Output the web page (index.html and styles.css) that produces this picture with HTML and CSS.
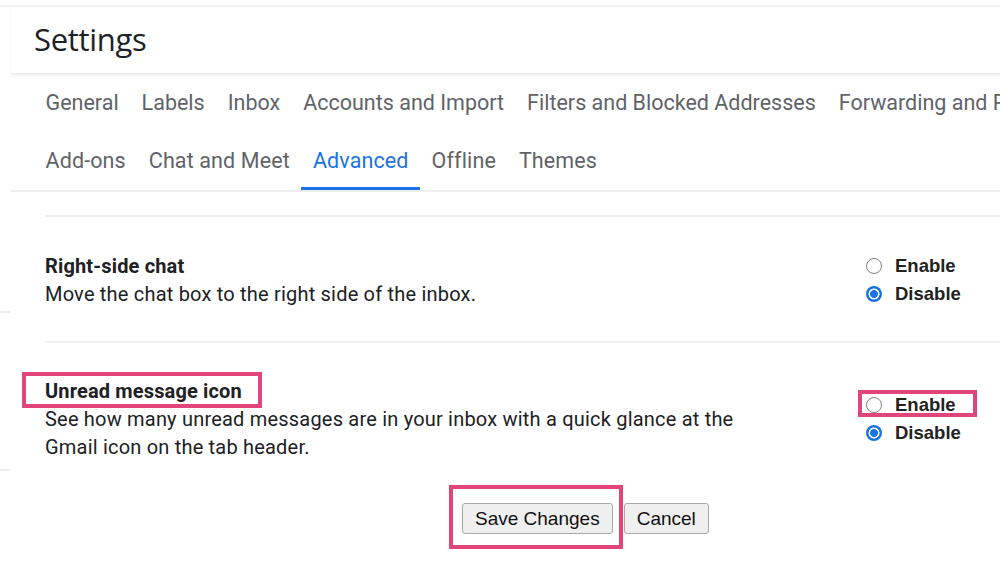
FILE: index.html
```html
<!DOCTYPE html>
<html>
<head>
<meta charset="utf-8">
<link rel="stylesheet" href="styles.css">
</head>
<body>
<div class="topline"></div>
<div class="page">
  <div class="side">
    <div class="mark mark-1"></div>
    <div class="mark mark-2"></div>
  </div>
  <div class="main">
    <div class="header">
      <h1 class="title">Settings</h1>
    </div>
    <nav class="tabs">
      <div class="tab-row">
        <span class="tab">General</span>
        <span class="tab">Labels</span>
        <span class="tab">Inbox</span>
        <span class="tab">Accounts and Import</span>
        <span class="tab">Filters and Blocked Addresses</span>
        <span class="tab">Forwarding and POP/IMAP</span>
      </div>
      <div class="tab-row">
        <span class="tab">Add-ons</span>
        <span class="tab">Chat and Meet</span>
        <span class="tab active">Advanced</span>
        <span class="tab">Offline</span>
        <span class="tab">Themes</span>
      </div>
    </nav>
    <div class="content">
      <section class="setting first">
        <div class="setting-text">
          <div class="setting-title">Right-side chat</div>
          <div class="setting-desc">Move the chat box to the right side of the inbox.</div>
        </div>
        <div class="options">
          <label class="option"><span class="radio"></span><span class="opt-label">Enable</span></label>
          <label class="option"><span class="radio checked"></span><span class="opt-label">Disable</span></label>
        </div>
      </section>
      <section class="setting second">
        <div class="setting-text">
          <div class="setting-title"><span class="hl hl-title">Unread message icon</span></div>
          <div class="setting-desc">See how many unread messages are in your inbox with a quick glance at the<br>Gmail icon on the tab header.</div>
        </div>
        <div class="options">
          <label class="option hl hl-opt"><span class="radio"></span><span class="opt-label">Enable</span></label>
          <label class="option"><span class="radio checked"></span><span class="opt-label">Disable</span></label>
        </div>
      </section>
      <div class="actions">
        <span class="hl hl-btn"><button class="btn">Save Changes</button></span>
        <button class="btn">Cancel</button>
      </div>
    </div>
  </div>
</div>
</body>
</html>
```

FILE: styles.css
```css
html, body {
  margin: 0;
  padding: 0;
  background: #fff;
  width: 1000px;
  height: 562px;
  overflow: hidden;
}

.topline {
  margin-top: 5px;
  height: 2px;
  background: #f1f1f1;
}

.page {
  display: flex;
}

.side {
  width: 11px;
  flex: none;
  display: flex;
  flex-direction: column;
}

.mark {
  height: 2px;
  width: 10px;
  background: #ececec;
}

.mark-1 { margin-top: 304px; }
.mark-2 { margin-top: 156px; }

.main {
  flex: 1;
  min-width: 0;
}

.header {
  height: 66px;
  padding-left: 23px;
  display: flex;
  align-items: center;
  border-bottom: 1px solid #ececec;
  box-shadow: 0 2px 2px rgba(0,0,0,0.06);
}

.title {
  margin: 0;
  font-family: "Open Sans", Roboto, sans-serif;
  font-weight: 400;
  font-size: 31px;
  color: #202124;
  letter-spacing: -0.3px;
  padding-bottom: 2px;
}

.tabs {
  padding-left: 23px;
  border-bottom: 2px solid #eeeeee;
  margin-top: 2px;
  overflow: hidden;
}

.tab-row {
  display: flex;
  white-space: nowrap;
  height: 57px;
}

.tab {
  font-family: Roboto, "Open Sans", sans-serif;
  font-size: 21.5px;
  color: #5f6368;
  padding: 0 11.5px;
  display: flex;
  align-items: center;
  border-bottom: 3px solid transparent;
  box-sizing: border-box;
  flex: none;
}

.tab-row:first-child .tab { padding-bottom: 2px; }

.tab-row + .tab-row .tab { letter-spacing: 0.12px; }

.tab.active {
  color: #1a73e8;
  border-bottom-color: #1a73e8;
}

.content {
  padding-left: 34px;
  padding-top: 23px;
}

.setting {
  display: flex;
  align-items: center;
  border-top: 2px solid #efefef;
}

.setting.first {
  padding: 35px 0 33px;
}

.setting.second {
  padding: 34px 0 14px;
}

.setting-text {
  flex: 1;
  font-family: Roboto, sans-serif;
  font-size: 20px;
  line-height: 28px;
  color: #202124;
}

.setting-title {
  font-weight: 700;
  letter-spacing: 0.15px;
}

.setting-desc {
  letter-spacing: 0.2px;
}

.options {
  width: 144px;
  flex: none;
  display: flex;
  flex-direction: column;
}

.option {
  display: flex;
  align-items: center;
  height: 27.5px;
  font-family: "Liberation Sans", Arial, sans-serif;
  font-weight: 700;
  font-size: 18.5px;
  color: #222;
}

.radio {
  width: 16px;
  height: 16px;
  border-radius: 50%;
  border: 1px solid #808080;
  box-sizing: border-box;
  margin-left: 10px;
  margin-right: 13px;
  flex: none;
}

.radio.checked {
  border: none;
  background: radial-gradient(circle, #1a73e8 0 3.6px, #fff 4.3px 5.2px, #1a73e8 5.8px);
}

.hl {
  position: relative;
}

.hl::after {
  content: "";
  position: absolute;
  border: 4px solid #e2457c;
  pointer-events: none;
}

.hl-title {
  display: inline-block;
}

.hl-title::after {
  top: -5px;
  bottom: -3px;
  left: -23px;
  right: -20px;
}

.hl-opt::after {
  top: -2px;
  bottom: 2px;
  left: 2px;
  right: 23px;
}

.actions {
  display: flex;
  align-items: center;
  padding-left: 417px;
  margin-top: 28px;
  gap: 11px;
}

.hl-btn {
  display: inline-flex;
}

.hl-btn::after {
  top: -18px;
  bottom: -15px;
  left: -13px;
  right: -10px;
}

.btn {
  font-family: "Liberation Sans", Arial, sans-serif;
  font-size: 19px;
  color: #111;
  background: #efefef;
  border: 1px solid #a9a9a9;
  border-radius: 3px;
  height: 31px;
  padding: 0 12px;
  line-height: 1;
}
```
